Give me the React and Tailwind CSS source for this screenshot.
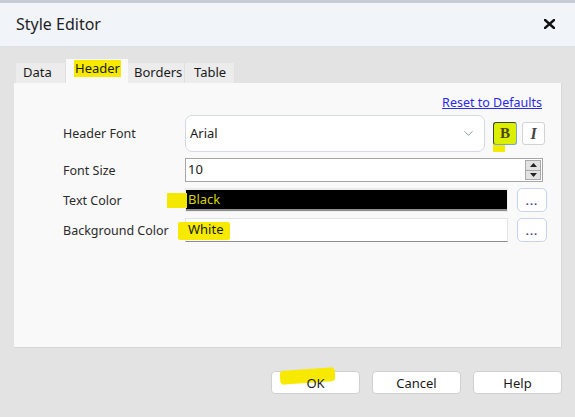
import React from "react";
import { ChevronDown } from "lucide-react";

const ui = { fontFamily: '"Noto Sans", "Open Sans", sans-serif' };

function Tab({ label, active, mark, width, pad }) {
  if (active) {
    return (
      <div
        className="relative h-[25px] bg-[#f9f9f9] flex items-start pt-[1px] text-[13px] text-[#1a1a1a] -mb-px z-10"
        style={{ width, paddingLeft: pad }}
      >
        <span className={mark ? "bg-[#f7ea00] px-[1px] leading-[17px]" : ""}>{label}</span>
      </div>
    );
  }
  return (
    <div
      className="h-[20px] bg-[#ececec] border-r border-[#e0e0e0] flex items-center text-[13px] text-[#1a1a1a]"
      style={{ width, paddingLeft: pad }}
    >
      {label}
    </div>
  );
}

function DotsButton() {
  return (
    <button className="w-[30px] h-[24px] rounded-[5px] bg-white border border-[#c8d4ee] flex items-end justify-center pb-[5px] text-[11px] leading-none text-[#4a3a8a] font-bold tracking-[1px]">
      ...
    </button>
  );
}

function DialogButton({ label, mark }) {
  return (
    <button className="relative w-[89px] h-[23px] rounded-[4px] bg-white border border-[#d0d0d0] text-[13px] text-[#1a1a1a] flex items-center justify-center">
      {mark && (
        <span className="absolute left-[8px] top-[-3px] w-[55px] h-[14px] bg-[#f7ea00] -rotate-[4deg] rounded-sm" />
      )}
      <span className="relative pt-[3px]">{label}</span>
    </button>
  );
}

export default function App() {
  return (
    <div className="w-[575px] h-[417px] bg-[#e3e3e3] flex flex-col overflow-hidden" style={ui}>
      {/* title bar */}
      <div className="border-t-[3px] border-[#c6cbd5] h-[47px] bg-[#f1f4f9] border-b border-b-[#dde1e8] flex items-center justify-between pl-[16px] pr-[20px]">
        <span className="text-[16px] text-[#1f1f1f] pb-[2px]">Style Editor</span>
        <svg width="11" height="10" viewBox="0 0 11 10" className="mb-[2px]">
          <path d="M1 1 L10 9 M10 1 L1 9" stroke="#111" strokeWidth="2.4" strokeLinecap="square" />
        </svg>
      </div>

      {/* tabs */}
      <div className="flex items-end pl-[16px] mt-[11px] h-[25px]">
        <Tab label="Data" width={50} pad={7} />
        <Tab label="Header" active mark width={62} pad={8} />
        <Tab label="Borders" width={57} pad={6} />
        <Tab label="Table" width={50} pad={9} />
      </div>

      {/* tab page */}
      <div className="ml-[14px] w-[548px] h-[265px] bg-[#f9f9f9] border-r border-b border-[#d8d8d8] flex flex-col">
        <div className="flex justify-end pr-[19px] pt-[12px] h-[32px]">
          <a className="text-[12.5px] leading-[15px] text-[#2b2bf0] underline">Reset to Defaults</a>
        </div>

        <div className="flex flex-col gap-[6px] pl-[49px] text-[12.5px] text-[#2b2b2b]">
          <div className="flex items-center h-[37px]">
            <span className="w-[122px] pt-[2px]">Header Font</span>
            <div className="w-[300px] h-[37px] rounded-[7px] bg-white border border-[#d3d9e6] flex items-center justify-between pl-[4px] pr-[8px]">
              <span className="text-[#1a1a1a] text-[13px]">Arial</span>
              <ChevronDown size={15} strokeWidth={1.6} className="text-[#8e9bb2]" />
            </div>
            <div className="relative ml-[8px] w-[24px] h-[23px]">
              <span className="absolute left-0 top-[8px] w-[12px] h-[22px] bg-[#f2ec00]" />
              <button className="relative w-[24px] h-[23px] rounded-[3px] border border-[#3a4a2a] border-r-[#7aa3d6] border-b-[#7aa3d6] bg-[#dcef00] flex items-center justify-center">
                <span className="text-[15px] font-bold text-[#4a4a10]" style={{ fontFamily: '"Liberation Serif", serif' }}>B</span>
              </button>
            </div>
            <button className="ml-[5px] w-[23px] h-[23px] rounded-[3px] border border-[#d2d2d2] bg-white flex items-center justify-center">
              <span className="text-[16px] italic font-bold text-[#444]" style={{ fontFamily: '"Liberation Serif", serif' }}>I</span>
            </button>
          </div>

          <div className="flex items-center h-[24px]">
            <span className="w-[122px] pt-[2px]">Font Size</span>
            <div className="w-[358px] h-[24px] bg-white border border-[#a6a6a6] flex items-center justify-between pl-[2px] pr-[1px]">
              <span className="text-[#1a1a1a] text-[13px]">10</span>
              <div className="flex flex-col w-[16px] h-[20px] border border-[#a9a9a9] bg-[#e2e2e2]">
                <div className="flex-1 flex items-center justify-center border-b border-[#a9a9a9]">
                  <svg width="7" height="4" viewBox="0 0 7 4"><path d="M3.5 0 L7 4 L0 4 Z" fill="#222" /></svg>
                </div>
                <div className="flex-1 flex items-center justify-center">
                  <svg width="7" height="4" viewBox="0 0 7 4"><path d="M0 0 L7 0 L3.5 4 Z" fill="#222" /></svg>
                </div>
              </div>
            </div>
          </div>

          <div className="flex items-center h-[24px]">
            <span className="relative w-[122px] pt-[2px]">
              Text Color
              <span className="absolute left-[104px] top-[3px] w-[20px] h-[15px] bg-[#f5e800]" />
            </span>
            <div className="w-[323px] h-[24px] bg-[#ececec] pt-[2px] pl-[1px] pr-[1px]">
              <div className="h-[21px] bg-black border-b-2 border-[#8e8e8e] flex items-center pl-[2px]">
                <span className="text-[#d6d200] text-[13px]">Black</span>
              </div>
            </div>
            <div className="ml-[9px]"><DotsButton /></div>
          </div>

          <div className="flex items-center h-[24px]">
            <span className="w-[122px] pt-[2px]">Background Color</span>
            <div className="relative w-[323px] h-[24px] bg-white border border-[#e4e4e4] border-b-[#8c8c8c] flex items-center pl-[2px]">
              <span className="absolute left-[-8px] top-[3px] w-[52px] h-[18px] bg-[#f7ea00] rounded-[2px]" />
              <span className="relative text-[#1a1a1a] text-[13px]">White</span>
            </div>
            <div className="ml-[9px]"><DotsButton /></div>
          </div>
        </div>
      </div>

      {/* dialog buttons */}
      <div className="flex justify-end gap-[12px] pr-[13px] mt-[23px]">
        <DialogButton label="OK" mark />
        <DialogButton label="Cancel" />
        <DialogButton label="Help" />
      </div>
    </div>
  );
}
